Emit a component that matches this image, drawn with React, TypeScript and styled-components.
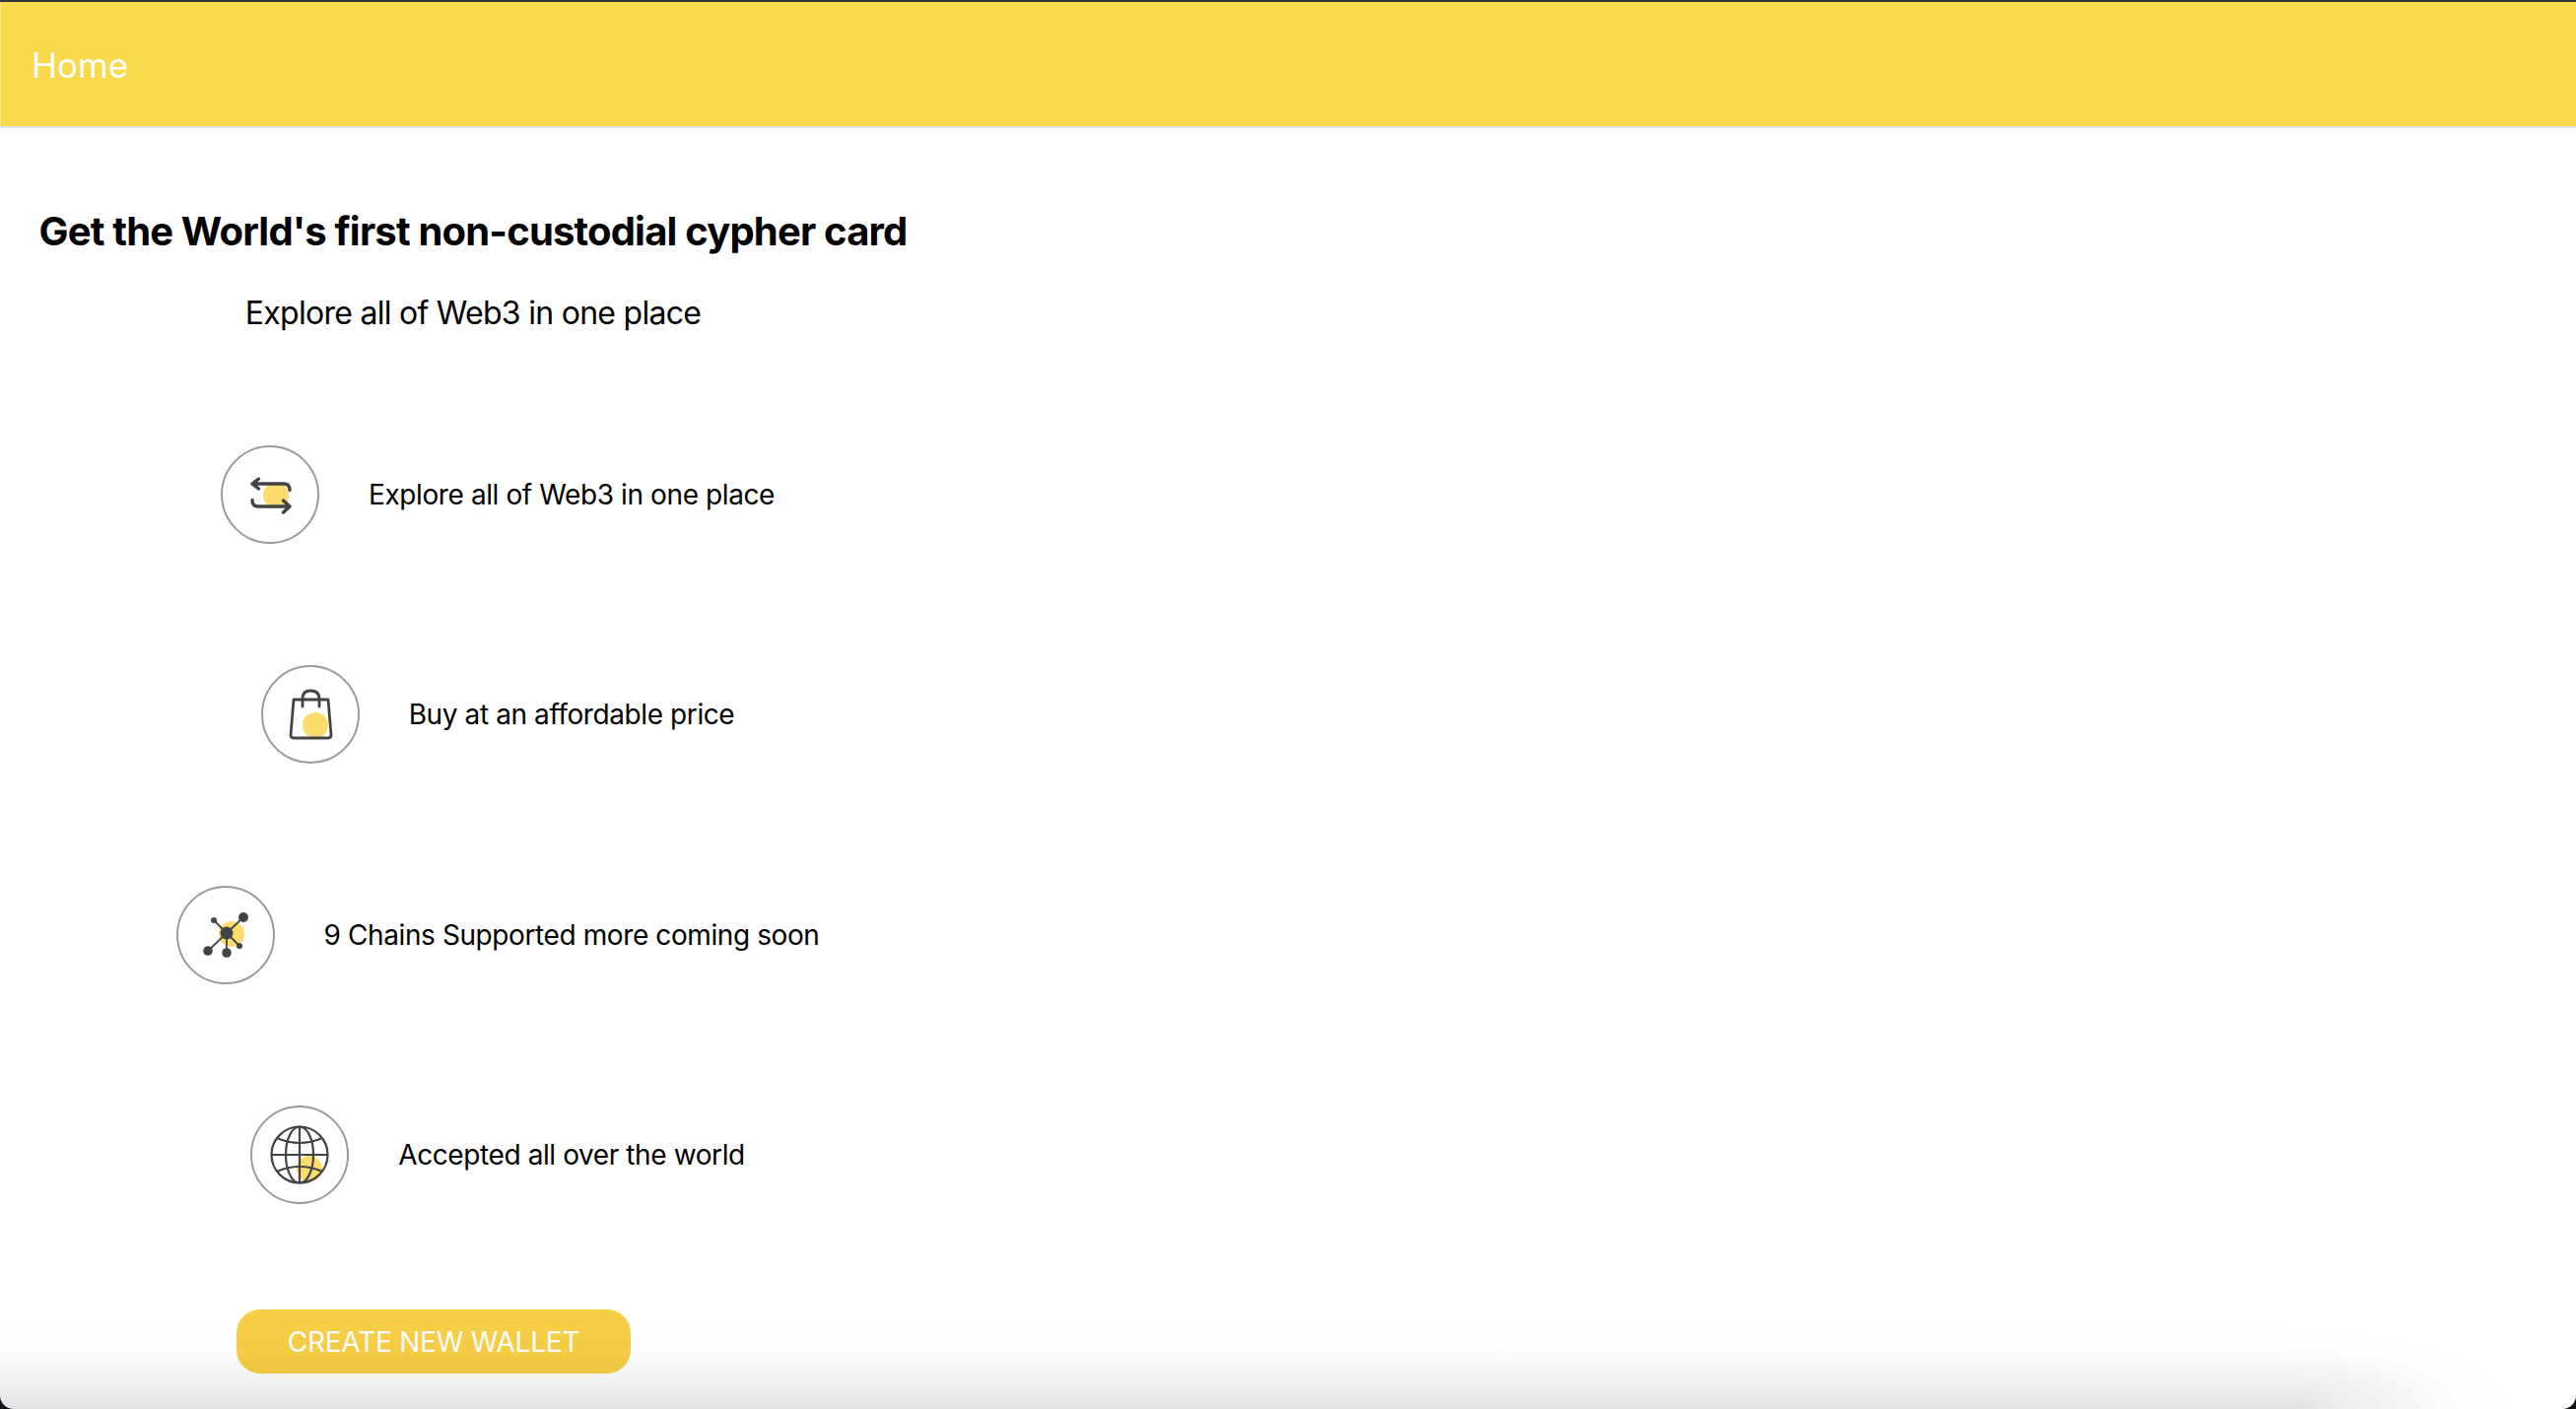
import React from "react";
import styled, { createGlobalStyle } from "styled-components";

const Global = createGlobalStyle`
  html, body { margin: 0; padding: 0; background: #14141a; overflow: hidden; }
  body { font-family: Inter, "Liberation Sans", sans-serif; }
`;

const Page = styled.div`
  position: relative;
  height: 1430px;
  box-sizing: border-box;
  border-top: 2px solid #2e323c;
  background: #fff;
  border-radius: 0 0 14px 14px;
  overflow: hidden;
`;

const Header = styled.header`
  height: 124px;
  box-sizing: content-box;
  background: #fad94d;
  border-bottom: 2px solid #dedede;
  border-left: 1px solid #f6e69a;
  display: flex;
  align-items: center;
  padding: 2px 0 0 31px;
  color: #fff;
  font-size: 35px;
`;

const Intro = styled.section`
  width: 960px;
  text-align: center;
  padding-top: 81px;
`;

const Title = styled.h1`
  margin: 0;
  font-size: 40px;
  line-height: 48px;
  font-weight: 700;
  color: #000;
  letter-spacing: -0.82px;
`;

const Subtitle = styled.p`
  margin: 39px 0 0;
  font-size: 32px;
  line-height: 39px;
  font-weight: 400;
  color: #000;
  letter-spacing: -0.72px;
`;

const Features = styled.ul`
  list-style: none;
  margin: 115px 0 0;
  padding: 0;
  width: 1010px;
  display: flex;
  flex-direction: column;
  align-items: center;
  gap: 123.4px;
`;

const Feature = styled.li`
  display: flex;
  align-items: center;
  gap: 50px;
`;

const Badge = styled.div`
  width: 100px;
  height: 100px;
  box-sizing: border-box;
  border: 2px solid #9a9a9a;
  border-radius: 50%;
  flex: none;
  display: flex;
  align-items: center;
  justify-content: center;
`;

const Glyph = styled.svg`
  width: 96px;
  height: 96px;
  display: block;
`;

const Label = styled.span`
  font-size: 28px;
  line-height: 34px;
  color: #000;
  white-space: nowrap;
  letter-spacing: -0.4px;
`;

const Cta = styled.button`
  display: block;
  margin: 107px 0 0 240px;
  width: 400px;
  height: 65px;
  border: 0;
  border-radius: 24px;
  background: #f7ce46;
  color: #fff;
  font-family: inherit;
  font-size: 28px;
  font-weight: 400;
  text-transform: uppercase;
  padding: 0;
  letter-spacing: -0.22px;
`;

const BottomFade = styled.div`
  position: absolute;
  left: 0;
  right: 0;
  bottom: 0;
  height: 90px;
  pointer-events: none;
  background:
    radial-gradient(ellipse 240px 85px at 0 100%, rgba(0,0,0,.115) 0%, rgba(0,0,0,.05) 35%, rgba(0,0,0,.012) 70%, transparent 100%) 2320px 0 / 294px 100% no-repeat,
    linear-gradient(to top, rgba(0,0,0,.115) 0, rgba(0,0,0,.05) 30px, rgba(0,0,0,.012) 60px, transparent 90px) 0 0 / 2320px 100% no-repeat;
`;

const INK = "#444";
const YELLOW = "#fcdc6c";

const Swap = () => (
  <Glyph viewBox="0 0 96 96" fill="none" stroke={INK} strokeWidth="3.4" strokeLinecap="round" strokeLinejoin="round">
    <circle cx="54" cy="49" r="13" fill={YELLOW} stroke="none" />
    <path d="M30 37H62Q68 37 68 43.5M36.5 32L30 37L36.5 42" />
    <path d="M30 53.5Q30 60 36 60H68M61.5 54L68 60L61.5 66" />
  </Glyph>
);

const Bag = () => (
  <Glyph viewBox="0 0 96 96" fill="none" stroke={INK} strokeWidth="2.8" strokeLinecap="round" strokeLinejoin="round">
    <circle cx="53" cy="59" r="13" fill={YELLOW} stroke="none" />
    <path d="M31 33H66L69 69Q69 72 66 72H31Q28 72 28 69Z" />
    <path d="M40 40V32Q40 24 48 24Q57 24 57 32V40" />
  </Glyph>
);

const Network = () => (
  <Glyph viewBox="0 0 96 96" fill={INK} stroke={INK} strokeWidth="1.8">
    <circle cx="54" cy="47" r="13" fill={YELLOW} stroke="none" />
    <path d="M49 46L66 30M49 46L36 33M49 46L30 64M49 46V66M49 46L62 59" fill="none" />
    <circle cx="49" cy="46" r="6.5" stroke="none" />
    <circle cx="66" cy="30" r="5" stroke="none" />
    <circle cx="36" cy="33" r="3" stroke="none" />
    <circle cx="30" cy="64" r="4.8" stroke="none" />
    <circle cx="49" cy="66" r="4.8" stroke="none" />
    <circle cx="62" cy="59" r="3" stroke="none" />
  </Glyph>
);

const Globe = () => (
  <Glyph viewBox="0 0 96 96" fill="none" stroke={INK} strokeWidth="2.2">
    <circle cx="58" cy="62" r="13" fill={YELLOW} stroke="none" />
    <circle cx="48" cy="48" r="28.5" />
    <ellipse cx="48" cy="48" rx="14" ry="28.5" />
    <path d="M48 19.5V76.5M19.5 48H76.5" />
    <path d="M25 31Q48 41 71 31M25 65Q48 55 71 65" />
  </Glyph>
);

const items: { label: string; icon: React.ReactNode }[] = [
  { label: "Explore all of Web3 in one place", icon: <Swap /> },
  { label: "Buy at an affordable price", icon: <Bag /> },
  { label: "9 Chains Supported more coming soon", icon: <Network /> },
  { label: "Accepted all over the world", icon: <Globe /> },
];

export default function App() {
  return (
    <Page>
      <Global />
      <Header>Home</Header>
      <Intro>
        <Title>Get the World's first non-custodial cypher card</Title>
        <Subtitle>Explore all of Web3 in one place</Subtitle>
      </Intro>
      <Features>
        {items.map((item) => (
          <Feature key={item.label}>
            <Badge>{item.icon}</Badge>
            <Label>{item.label}</Label>
          </Feature>
        ))}
      </Features>
      <Cta>Create new wallet</Cta>
      <BottomFade />
    </Page>
  );
}
